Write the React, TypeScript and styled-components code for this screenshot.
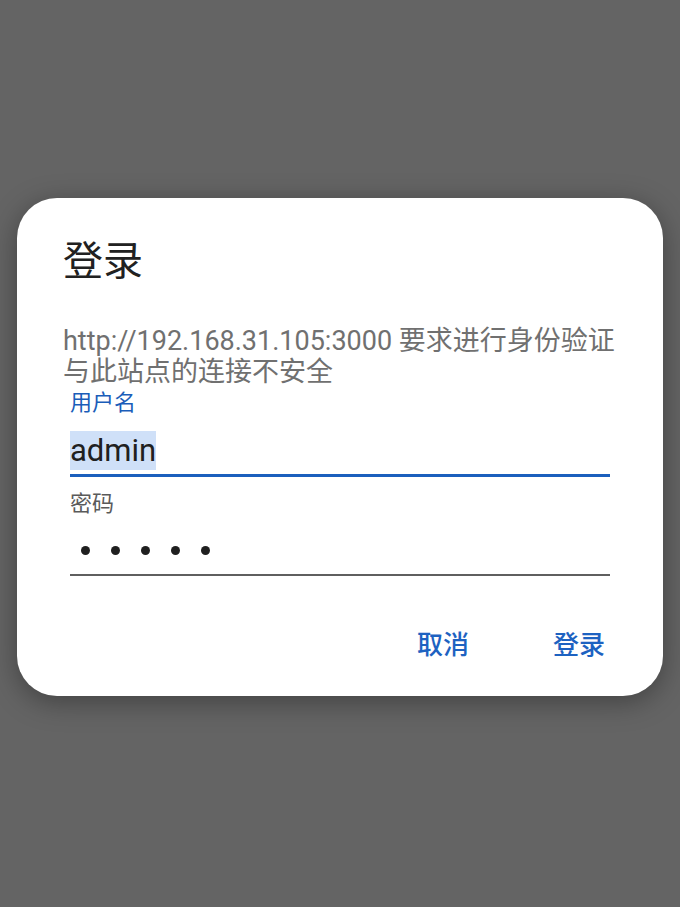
import React from 'react'
import styled, { createGlobalStyle } from 'styled-components'

const GlobalStyle = createGlobalStyle`
  html, body {
    margin: 0;
    padding: 0;
    background: #646464;
  }
  body {
    font-family: Roboto, "Noto Sans CJK SC", sans-serif;
    -webkit-font-smoothing: antialiased;
  }
`

const Backdrop = styled.div`
  width: 680px;
  height: 907px;
  box-sizing: border-box;
  padding: 198px 17px 0;
  background: #646464;
`

const Dialog = styled.div`
  width: 646px;
  height: 498px;
  box-sizing: border-box;
  padding: 40px 46px 0;
  background: #fff;
  border-radius: 40px;
  box-shadow: 0 6px 28px rgba(0, 0, 0, 0.35);
  display: flex;
  flex-direction: column;
`

const Title = styled.h1`
  margin: 0;
  font-size: 40px;
  line-height: 48px;
  font-weight: 400;
  color: #212121;
`

const Message = styled.p`
  margin: 40px 0 0;
  font-size: 27px;
  line-height: 31px;
  color: #707070;
  white-space: nowrap;
`

const Fields = styled.div`
  padding: 0 7px;
  display: flex;
  flex-direction: column;
`

const Label = styled.label<{ $active?: boolean }>`
  display: block;
  font-size: 22px;
  line-height: 30px;
  color: ${p => (p.$active ? '#1a5db9' : '#5a5a5a')};
`

const Field = styled.div<{ $active?: boolean }>`
  height: ${p => (p.$active ? '48px' : '47px')};
  padding-top: 8px;
  display: flex;
  align-items: center;
  border-bottom: ${p => (p.$active ? '3px solid #1b5fbd' : '2px solid #5f5f5f')};
  margin-bottom: 12px;
`

const Selected = styled.span`
  font-size: 31px;
  line-height: 39px;
  color: #202020;
  background: #cfe0f8;
`

const Dots = styled.div`
  display: flex;
  gap: 21px;
  padding-left: 11px;
`

const Dot = styled.span`
  width: 9px;
  height: 9px;
  border-radius: 50%;
  background: #1f1f1f;
`

const Actions = styled.div`
  margin-top: auto;
  margin-bottom: 35px;
  padding-right: 12px;
  display: flex;
  justify-content: flex-end;
  gap: 84px;
`

const ActionButton = styled.button`
  border: none;
  background: none;
  padding: 0;
  font-family: inherit;
  font-size: 26px;
  font-weight: 500;
  line-height: 32px;
  color: #1d62c1;
`

export default function App() {
  return (
    <Backdrop>
      <GlobalStyle />
      <Dialog>
        <Title>登录</Title>
        <Message>
          http://192.168.31.105:3000 要求进行身份验证
          <br />
          与此站点的连接不安全
        </Message>
        <Fields>
          <Label $active>用户名</Label>
          <Field $active>
            <Selected>admin</Selected>
          </Field>
          <Label>密码</Label>
          <Field>
            <Dots>
              {[0, 1, 2, 3, 4].map(i => (
                <Dot key={i} />
              ))}
            </Dots>
          </Field>
        </Fields>
        <Actions>
          <ActionButton>取消</ActionButton>
          <ActionButton>登录</ActionButton>
        </Actions>
      </Dialog>
    </Backdrop>
  )
}
